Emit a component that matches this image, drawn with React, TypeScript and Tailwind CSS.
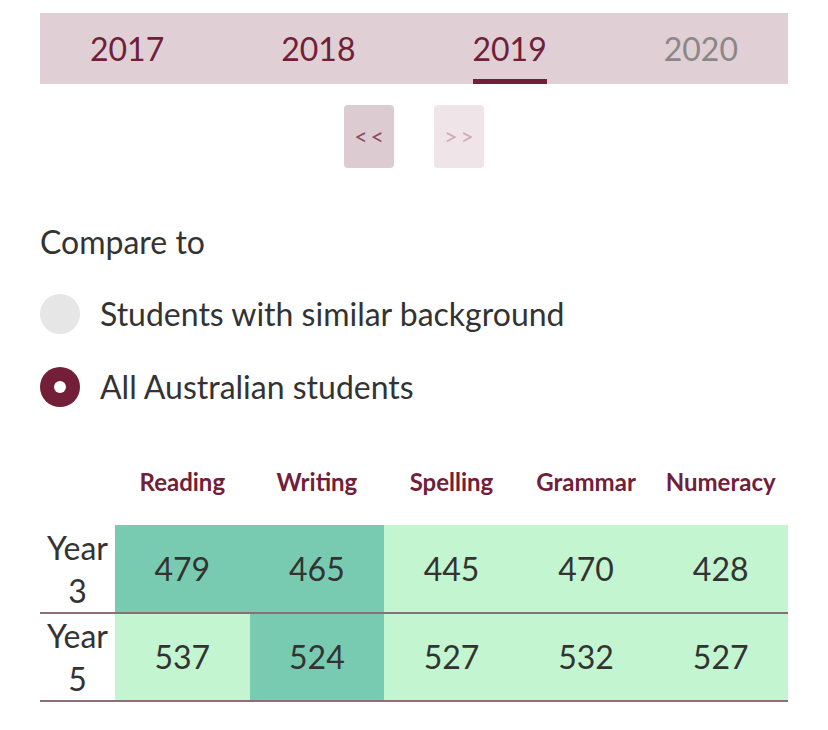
import React, { useState } from 'react';

const years = ['2017', '2018', '2019', '2020'];
const subjects = ['Reading', 'Writing', 'Spelling', 'Grammar', 'Numeracy'];

const rows = [
  { label: '3', scores: [479, 465, 445, 470, 428], dark: [true, true, false, false, false] },
  { label: '5', scores: [537, 524, 527, 532, 527], dark: [false, true, false, false, false] },
];

export default function App() {
  const [year, setYear] = useState('2019');
  const [compare, setCompare] = useState('all');

  return (
    <div className="min-h-screen bg-white px-[40px] pt-[13px] font-['Lato',sans-serif] text-[#333333]">
      <div className="flex h-[71px] bg-[#e0d0d5] pl-[50px] gap-[117px]">
        {years.map((y) => (
          <button
            key={y}
            onClick={() => setYear(y)}
            className={
              'relative flex h-full items-center text-[32px] leading-none ' +
              (y === '2020' ? 'text-[#8b8787]' : 'text-[#702039]')
            }
          >
            {y}
            {y === year && (
              <span className="absolute bottom-0 left-0 right-0 h-[5px] bg-[#702039]" />
            )}
          </button>
        ))}
      </div>

      <div className="mt-[21px] flex justify-center gap-[40px]">
        <button className="flex h-[63px] w-[50px] items-center justify-center rounded-[4px] bg-[#dccbd0] pl-[3px] text-[23px] tracking-[3px] text-[#8c4a5f]">
          &lt;&lt;
        </button>
        <button className="flex h-[63px] w-[50px] items-center justify-center rounded-[4px] bg-[#efe4e7] pl-[3px] text-[23px] tracking-[3px] text-[#cfaab6]">
          &gt;&gt;
        </button>
      </div>

      <div className="mt-[54px] text-[32px] leading-[40px]">Compare to</div>

      <div className="mt-[32px] flex flex-col gap-[33px]">
        {[
          { key: 'similar', text: 'Students with similar background' },
          { key: 'all', text: 'All Australian students' },
        ].map((o) => (
          <label key={o.key} className="flex cursor-pointer items-center gap-[20px]" onClick={() => setCompare(o.key)}>
            {compare === o.key ? (
              <span className="flex h-[40px] w-[40px] items-center justify-center rounded-full bg-[#741f39]">
                <span className="h-[12px] w-[12px] rounded-full bg-white" />
              </span>
            ) : (
              <span className="h-[40px] w-[40px] rounded-full bg-[#e6e6e6]" />
            )}
            <span className="text-[32px] leading-[40px]">{o.text}</span>
          </label>
        ))}
      </div>

      <table className="mt-[34px] w-full table-fixed border-collapse">
        <thead>
          <tr className="h-[84px]">
            <th className="w-[75px]" />
            {subjects.map((s) => (
              <th key={s} className="pb-[2px] text-center text-[24px] font-bold text-[#702039]">
                {s}
              </th>
            ))}
          </tr>
        </thead>
        <tbody>
          {rows.map((r) => (
            <tr key={r.label} className="h-[88px] border-b-2 border-[#8c6f76]">
              <td className="text-center text-[32px] leading-[43px]">
                Year
                <br />
                {r.label}
              </td>
              {r.scores.map((n, i) => (
                <td
                  key={i}
                  className={
                    'text-center text-[32px] ' + (r.dark[i] ? 'bg-[#78cbb0]' : 'bg-[#c3f5d0]')
                  }
                >
                  {n}
                </td>
              ))}
            </tr>
          ))}
        </tbody>
      </table>
    </div>
  );
}
